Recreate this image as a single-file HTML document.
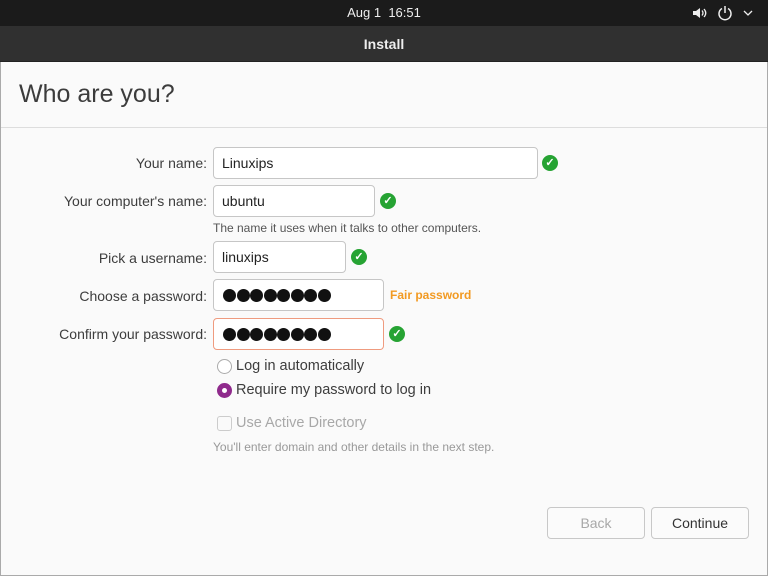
<!DOCTYPE html><html><head><style>
*{margin:0;padding:0;box-sizing:border-box}
body{width:768px;height:576px;overflow:hidden;background:#fafafa;font-family:"Liberation Sans",sans-serif;position:relative;color:#3d3d3d}
.a{position:absolute}
.top{left:0;top:0;width:768px;height:26px;background:#1b1b1b;color:#eee;font-size:13px;text-align:center;line-height:26px}
.tb{left:0;top:26px;width:768px;height:36px;background:#303030;color:#eee;font-size:14px;font-weight:bold;text-align:center;line-height:36px;border-bottom:1px solid #222}
.main{left:0;top:62px;width:768px;height:514px;border:1px solid #aaa;border-top:none;background:#fafafa}
h1{position:absolute;left:19px;top:80px;font-size:25px;font-weight:normal;color:#3c3c3c}
.sep{left:1px;top:127px;width:766px;height:1px;background:#ddd}
.lb{font-size:14px;color:#3d3d3d;text-align:right;width:207px;left:0}
.in{border:1px solid #c6c6c6;border-radius:4px;background:#fff;font-size:14px;color:#222;padding-left:8px;line-height:30px;height:32px}
.ck{width:16px;height:16px;border-radius:50%;background:#26a333;color:#fff;font-size:11px;line-height:16px;text-align:center;font-weight:bold}
.dots{padding-left:9px;padding-top:9px}
.dots i{display:inline-block;width:13px;height:13px;border-radius:50%;background:#111;margin-right:0.5px;vertical-align:top}
.sm{font-size:12px;color:#555}
.btn{height:32px;border:1px solid #c8c8c8;border-radius:4px;background:#fbfbfb;font-size:14px;text-align:center;line-height:30px}
</style></head><body>
<div class="a top">Aug 1&nbsp;&nbsp;16:51</div>
<svg class="a" style="left:692px;top:6px" width="16" height="14" viewBox="0 0 16 14"><path d="M1 5h3l4-3v10l-4-3H1z" fill="#eee"/><path d="M10 4.5q2 2.5 0 5M12 3q3.5 4 0 8" stroke="#eee" stroke-width="1.3" fill="none"/></svg>
<svg class="a" style="left:717px;top:5px" width="16" height="16" viewBox="0 0 16 16"><path d="M5 3.5A6 6 0 1 0 11 3.5" stroke="#eee" stroke-width="1.5" fill="none"/><path d="M8 1v7" stroke="#eee" stroke-width="1.5"/></svg>
<svg class="a" style="left:742px;top:9px" width="12" height="8" viewBox="0 0 12 8"><path d="M2 2l4 4 4-4" stroke="#eee" stroke-width="1.3" fill="none"/></svg>
<div class="a tb">Install</div>
<div class="a main"></div>
<h1>Who are you?</h1>
<div class="a sep"></div>

<div class="a lb" style="top:155px">Your name:</div>
<div class="a in" style="left:213px;top:147px;width:325px">Linuxips</div>
<div class="a ck" style="left:542px;top:155px">✓</div>

<div class="a lb" style="top:193px">Your computer's name:</div>
<div class="a in" style="left:213px;top:185px;width:162px">ubuntu</div>
<div class="a ck" style="left:380px;top:193px">✓</div>
<div class="a sm" style="left:213px;top:221px">The name it uses when it talks to other computers.</div>

<div class="a lb" style="top:250px">Pick a username:</div>
<div class="a in" style="left:213px;top:241px;width:133px">linuxips</div>
<div class="a ck" style="left:351px;top:249px">✓</div>

<div class="a lb" style="top:288px">Choose a password:</div>
<div class="a in dots" style="left:213px;top:279px;width:171px"><i></i><i></i><i></i><i></i><i></i><i></i><i></i><i></i></div>
<div class="a" style="left:390px;top:288px;font-size:12px;font-weight:bold;color:#f29a22">Fair password</div>

<div class="a lb" style="top:326px">Confirm your password:</div>
<div class="a in dots" style="left:213px;top:318px;width:171px;border-color:#ef9b7f"><i></i><i></i><i></i><i></i><i></i><i></i><i></i><i></i></div>
<div class="a ck" style="left:389px;top:326px">✓</div>

<div class="a" style="left:217px;top:359px;width:15px;height:15px;border:1px solid #aaa;border-radius:50%;background:#fff"></div>
<div class="a" style="left:236px;top:358px;font-size:14.5px">Log in automatically</div>
<div class="a" style="left:217px;top:383px;width:15px;height:15px;border-radius:50%;background:#8f2a8c"><div style="margin:5px;width:5px;height:5px;border-radius:50%;background:#fff"></div></div>
<div class="a" style="left:236px;top:382px;font-size:14.5px">Require my password to log in</div>

<div class="a" style="left:217px;top:416px;width:15px;height:15px;border:1px solid #ccc;border-radius:3px;background:#fafafa"></div>
<div class="a" style="left:236px;top:415px;font-size:14.5px;color:#a8a8a8">Use Active Directory</div>
<div class="a sm" style="left:213px;top:440px;color:#999">You'll enter domain and other details in the next step.</div>

<div class="a btn" style="left:547px;top:507px;width:98px;color:#a8a8a8">Back</div>
<div class="a btn" style="left:651px;top:507px;width:98px;color:#333">Continue</div>
</body></html>
